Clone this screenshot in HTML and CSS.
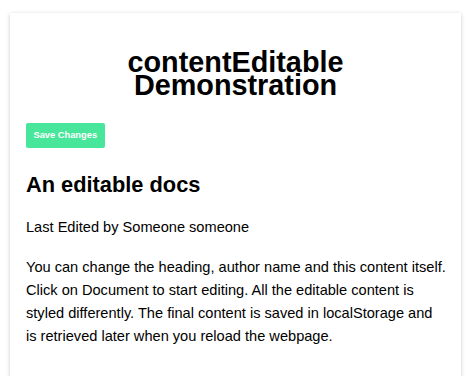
FILE: index.html
```html
<!DOCTYPE html>
<html lang="en">
<head>
<meta charset="utf-8">
<title>contentEditable Demonstration</title>
<link rel="stylesheet" href="styles.css">
</head>
<body>
  <main class="card">
    <h1 class="title">contentEditable<br>Demonstration</h1>
    <button class="save-btn" type="button">Save Changes</button>
    <div class="doc">
      <h2 class="doc-heading">An editable docs</h2>
      <p class="doc-author">Last Edited by Someone someone</p>
      <p class="doc-body">You can change the heading, author name and this content itself. Click on Document to start editing. All the editable content is styled differently. The final content is saved in localStorage and is&nbsp;retrieved later when you reload the webpage.</p>
    </div>
  </main>
</body>
</html>
```
FILE: styles.css
```css
html, body {
  margin: 0;
  padding: 0;
  background: #ffffff;
}

body {
  font-family: "Liberation Sans", Arial, Helvetica, sans-serif;
  color: #000;
}

.card {
  display: block;
  width: 451px;
  box-sizing: border-box;
  margin: 13px 0 0 10px;
  padding: 15px 16px 15px 16px;
  background: #fff;
  box-shadow: 0 1px 4px rgba(0, 0, 0, 0.22);
}

.title {
  margin: 23px 0 0;
  font-size: 28.8px;
  font-weight: bold;
  line-height: 23px;
  text-align: center;
}

.save-btn {
  display: block;
  margin: 26px 0 0;
  padding: 7px 7.5px;
  border: none;
  border-radius: 2px;
  background: #48e69a;
  color: #fff;
  font-family: "Liberation Sans", Arial, Helvetica, sans-serif;
  font-size: 9.3px;
  font-weight: bold;
  line-height: 11px;
}

.doc-heading {
  margin: 24px 0 0;
  font-size: 21.8px;
  font-weight: bold;
  line-height: 26px;
}

.doc-author {
  margin: 18px 0 0;
  font-size: 14.6px;
  line-height: 23px;
}

.doc-body {
  margin: 17px -8px 13px 0;
  font-size: 14.6px;
  line-height: 23px;
}
```
